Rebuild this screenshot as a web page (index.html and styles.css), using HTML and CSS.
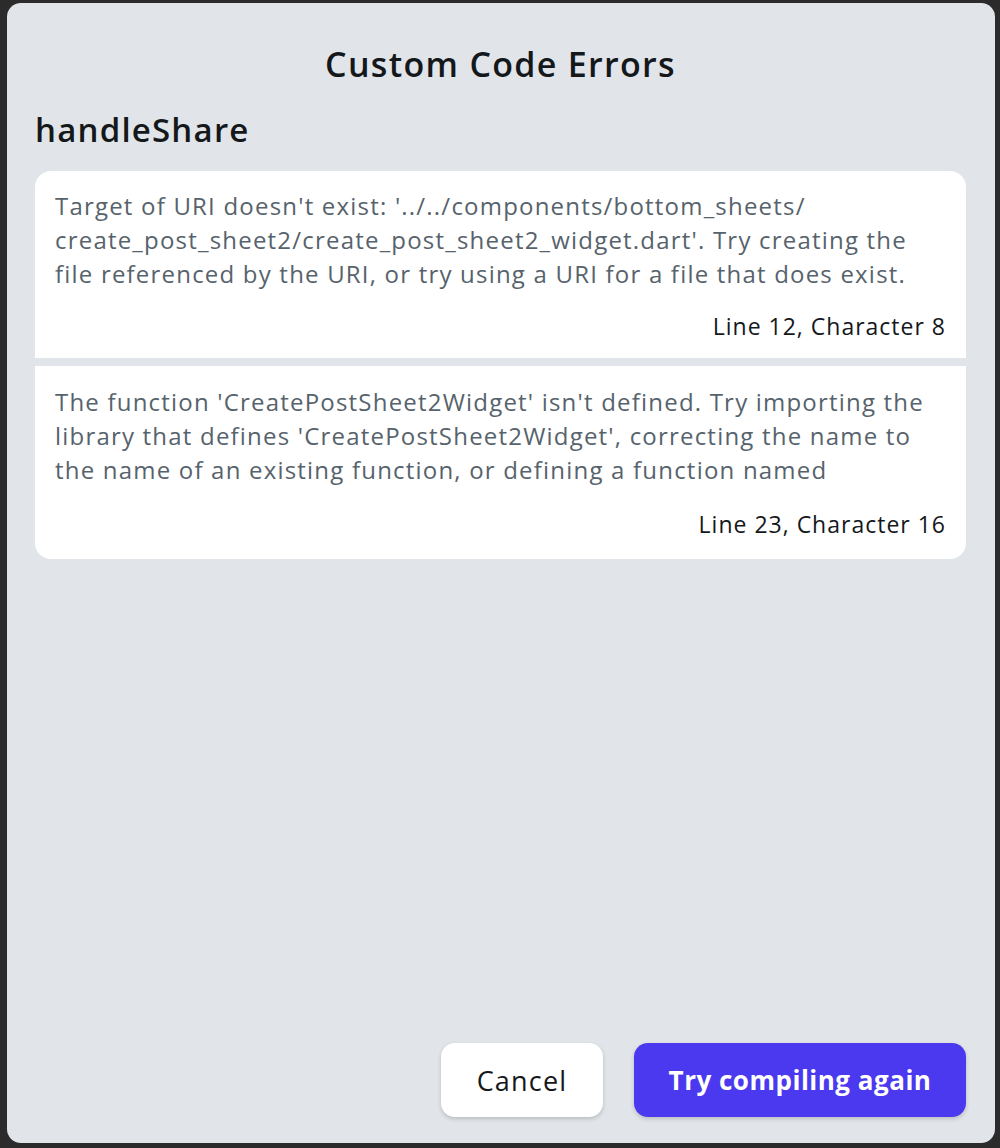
FILE: index.html
```html
<!DOCTYPE html>
<html>
<head>
<meta charset="utf-8">
<link rel="stylesheet" href="styles.css">
</head>
<body>
<div class="dialog">
  <h1 class="title">Custom Code Errors</h1>
  <h2 class="fn-name">handleShare</h2>
  <div class="card">
    <div class="item">
      <p class="msg">Target of URI doesn't exist: '../<wbr>../<wbr>components/<wbr>bottom_sheets/<wbr>create_post_sheet2/<wbr>create_post_sheet2_widget.dart'. Try creating the file referenced by the URI, or try using a URI for a file that does exist.</p>
      <div class="loc">Line 12, Character 8</div>
    </div>
    <div class="item item-last">
      <p class="msg">The function 'CreatePostSheet2Widget' isn't defined. Try importing the library that defines 'CreatePostSheet2Widget', correcting the name to the name of an existing function, or defining a function named</p>
      <div class="loc">Line 23, Character 16</div>
    </div>
  </div>
  <div class="spacer"></div>
  <div class="actions">
    <button class="btn btn-cancel">Cancel</button>
    <button class="btn btn-primary">Try compiling again</button>
  </div>
</div>
</body>
</html>
```
FILE: styles.css
```css
html, body {
  margin: 0;
  padding: 0;
  background: #2b2b2b;
}
body {
  width: 1000px;
  height: 1148px;
  overflow: hidden;
  font-family: "Open Sans", "Noto Sans", sans-serif;
}
.dialog {
  box-sizing: border-box;
  margin: 3px 5px 0 7px;
  width: 988px;
  height: 1140px;
  background: #e1e5e9;
  border-radius: 14px;
  padding: 39px 29px 26px 28px;
  display: flex;
  flex-direction: column;
}
.title {
  margin: 0;
  text-align: center;
  font-size: 34px;
  line-height: 44px;
  letter-spacing: 1.3px;
  font-weight: 600;
  color: #14181b;
}
.fn-name {
  margin: 24px 0 21px 0;
  font-size: 33px;
  line-height: 40px;
  letter-spacing: 1.2px;
  font-weight: 600;
  color: #14181b;
}
.card {
  border-radius: 16px;
  overflow: hidden;
  display: flex;
  flex-direction: column;
  gap: 8px;
  background: #e1e5e9;
}
.item {
  background: #ffffff;
  padding: 18px 31px 19px 20px;
}
.item-last {
  padding-top: 19px;
  padding-bottom: 22px;
}
.msg {
  margin: 0;
  font-size: 24px;
  line-height: 34px;
  letter-spacing: 1.2px;
  color: #57636c;
}
.loc {
  margin-top: 22px;
  margin-right: -11px;
  text-align: right;
  font-size: 23px;
  line-height: 26px;
  letter-spacing: 1px;
  color: #14181b;
}
.item-last .loc {
  margin-top: 24px;
}
.spacer {
  flex: 1;
}
.actions {
  display: flex;
  justify-content: flex-end;
  gap: 31px;
}
.btn {
  height: 74px;
  border: none;
  border-radius: 14px;
  font-family: inherit;
  cursor: pointer;
}
.btn-cancel {
  width: 162px;
  background: #ffffff;
  color: #14181b;
  font-size: 27px;
  letter-spacing: 1.2px;
  box-shadow: 0 2px 4px rgba(0,0,0,0.18);
}
.btn-primary {
  width: 332px;
  background: #4b39ef;
  color: #ffffff;
  font-size: 26px;
  letter-spacing: 0.5px;
  font-weight: 700;
  box-shadow: 0 2px 4px rgba(0,0,0,0.18);
}
```
